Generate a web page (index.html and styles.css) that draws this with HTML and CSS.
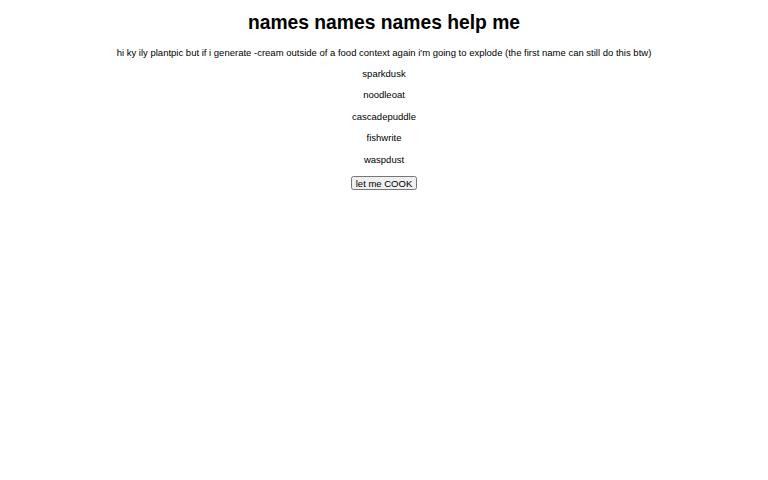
FILE: index.html
```html
<!DOCTYPE html>
<html lang="en">
<head>
    <meta charset="UTF-8">
    <meta name="viewport" content="width=device-width, initial-scale=1.0">
    <title>names names names help me</title>
    <link rel="stylesheet" href="styles.css">
</head>
<body>
    <h1>names names names help me</h1>
    <p>hi ky ily plantpic but if i generate -cream outside of a food context again i'm going to explode (the first name can still do this btw)</p>
    <div class="names" id="names">
        <p>sparkdusk</p>
        <p>noodleoat</p>
        <p>cascadepuddle</p>
        <p>fishwrite</p>
        <p>waspdust</p>
    </div>
    <button id="cook">let me COOK</button>
</body>
</html>
```

FILE: styles.css
```css
body {
    margin: 0;
    padding: 0 8px;
    font-family: 'Liberation Sans', Arial, sans-serif;
    font-size: 9.5px;
    text-align: center;
    color: #000;
    background-color: #fff;
}
h1 {
    font-size: 19.3px;
    margin: 12px 0 13px;
}
p {
    line-height: 11.5px;
    margin: 10px 0;
}
.names {
    margin-top: -1px;
}
button {
    font-family: inherit;
    font-size: 9.5px;
    height: 14px;
    padding: 0 3px;
    margin-top: 1px;
}
```
